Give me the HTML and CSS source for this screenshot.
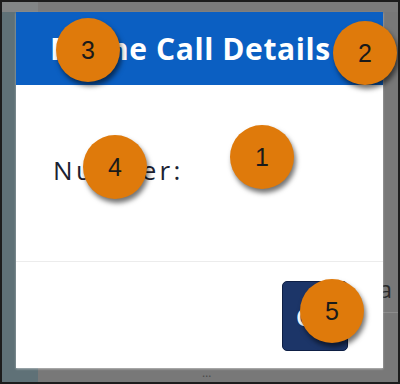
FILE: index.html
```html
<!DOCTYPE html>
<html>
<head>
<meta charset="utf-8">
<link rel="stylesheet" href="styles.css">
</head>
<body>
<div class="frame">
  <div class="page">
    <div class="corner"></div>
    <div class="topbar"></div>
    <div class="sidebar"></div>
    <div class="main">
      <div class="row row-a">data</div>
      <div class="row row-b"></div>
      <div class="row row-c">…</div>
    </div>
  </div>

  <div class="modal">
    <div class="modal-header">
      <h1 class="modal-title">Phone Call Details</h1>
    </div>
    <div class="modal-body">
      <div class="field-label">Number:</div>
    </div>
    <div class="modal-footer">
      <button class="btn-ok">OK</button>
    </div>
  </div>

  <div class="badge b1">1</div>
  <div class="badge b2">2</div>
  <div class="badge b3">3</div>
  <div class="badge b4">4</div>
  <div class="badge b5">5</div>
</div>
</body>
</html>
```
FILE: styles.css
```css
html, body {
  margin: 0;
  padding: 0;
  background: #1a1a1a;
}
.frame {
  position: relative;
  width: 396px;
  height: 380px;
  border: 2px solid #1c1c1c;
  overflow: hidden;
  font-family: "Open Sans", "Liberation Sans", sans-serif;
}
.page {
  display: grid;
  grid-template-columns: 36px 1fr;
  grid-template-rows: 10px 1fr;
  width: 100%;
  height: 100%;
}
.corner { background: #828586; }
.topbar { background: #7b7b7b; }
.sidebar { background: #5f7177; }
.main {
  background: #787878;
  display: flex;
  flex-direction: column;
  padding-top: 262px;
}
.row-a {
  height: 30px;
  text-align: right;
  padding-right: 6px;
  font-size: 24px;
  line-height: 30px;
  color: #2a2a2a;
}
.row-b {
  height: 1px;
  margin-top: 8px;
  background: #8c8c8c;
}
.row-c {
  margin-top: 54px;
  padding-left: 164px;
  font-size: 12px;
  line-height: 12px;
  color: #4a4a4a;
}
.modal {
  position: absolute;
  left: 14px;
  top: 10px;
  width: 367px;
  height: 356px;
  background: #ffffff;
  display: flex;
  flex-direction: column;
  box-shadow: 0 1px 2px rgba(255,255,255,0.5);
}
.modal-header {
  height: 73px;
  background: #0b5fc2;
  display: flex;
  align-items: center;
  padding-left: 34px;
}
.modal-title {
  margin: 0;
  color: #ffffff;
  font-size: 30px;
  font-weight: 700;
  letter-spacing: 0.6px;
}
.modal-body {
  height: 176px;
  padding-left: 37px;
  display: flex;
  align-items: center;
  border-bottom: 1px solid #ececec;
}
.field-label {
  font-size: 26px;
  color: #1c2232;
  letter-spacing: 3.3px;
  margin-top: -6px;
}
.modal-footer {
  flex: 1;
  display: flex;
  justify-content: flex-end;
  align-items: flex-start;
  padding-top: 19px;
  padding-right: 35px;
}
.btn-ok {
  width: 66px;
  height: 70px;
  background: #1c3568;
  border: 1px solid #0e1f45;
  border-radius: 5px;
  color: #ffffff;
  font-family: "Open Sans", "Liberation Sans", sans-serif;
  font-size: 24px;
  font-weight: 600;
  text-align: left;
  padding-left: 13px;
}
.badge {
  position: absolute;
  width: 64px;
  height: 64px;
  border-radius: 50%;
  background: #df7a0b;
  color: #1a1a1a;
  font-family: "Liberation Sans", sans-serif;
  font-size: 25px;
  display: flex;
  align-items: center;
  justify-content: center;
  box-shadow: 2px 4px 5px rgba(0,0,0,0.55);
}
.b1 { left: 228px; top: 123px; }
.b2 { left: 331px; top: 19px; }
.b3 { left: 54px; top: 16px; }
.b4 { left: 81px; top: 133px; }
.b5 { left: 298px; top: 277px; }
```
